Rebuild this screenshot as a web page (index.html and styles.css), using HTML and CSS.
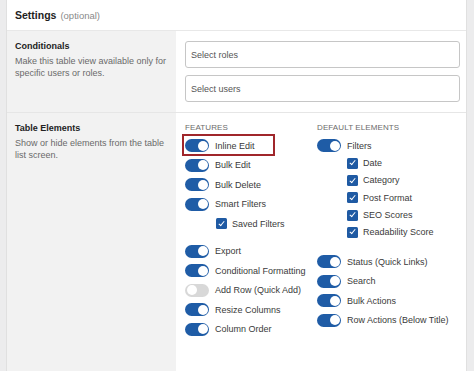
FILE: index.html
```html
<!DOCTYPE html>
<html lang="en">
<head>
    <meta charset="UTF-8">
    <meta name="viewport" content="width=device-width, initial-scale=1.0">
    <title>Settings</title>
    <link rel="stylesheet" href="styles.css">
</head>
<body>
    <div class="panel">
        <div class="panel-header">
            <span class="panel-title">Settings</span> <span class="optional">(optional)</span>
        </div>

        <!-- Conditionals -->
        <div class="row">
            <div class="row-label">
                <h3>Conditionals</h3>
                <p>Make this table view available only for specific users or roles.</p>
            </div>
            <div class="row-body conditions">
                <div class="select">Select roles</div>
                <div class="select">Select users</div>
            </div>
        </div>

        <!-- Table elements -->
        <div class="row last">
            <div class="row-label">
                <h3>Table Elements</h3>
                <p>Show or hide elements from the table list screen.</p>
            </div>
            <div class="row-body elements">
                <div class="col">
                    <div class="col-title">Features</div>
                    <div class="group">
                        <div class="item highlight"><span class="toggle on"></span>Inline Edit</div>
                        <div class="item"><span class="toggle on"></span>Bulk Edit</div>
                        <div class="item"><span class="toggle on"></span>Bulk Delete</div>
                        <div class="item"><span class="toggle on"></span>Smart Filters</div>
                        <div class="item sub"><span class="check"></span>Saved Filters</div>
                    </div>
                    <div class="group spaced">
                        <div class="item"><span class="toggle on"></span>Export</div>
                        <div class="item"><span class="toggle on"></span>Conditional Formatting</div>
                        <div class="item"><span class="toggle"></span>Add Row (Quick Add)</div>
                        <div class="item"><span class="toggle on"></span>Resize Columns</div>
                        <div class="item"><span class="toggle on"></span>Column Order</div>
                    </div>
                </div>
                <div class="col">
                    <div class="col-title">Default Elements</div>
                    <div class="group">
                        <div class="item"><span class="toggle on"></span>Filters</div>
                        <div class="check-list">
                            <div class="item sub"><span class="check"></span>Date</div>
                            <div class="item sub"><span class="check"></span>Category</div>
                            <div class="item sub"><span class="check"></span>Post Format</div>
                            <div class="item sub"><span class="check"></span>SEO Scores</div>
                            <div class="item sub"><span class="check"></span>Readability Score</div>
                        </div>
                    </div>
                    <div class="group spaced-lg">
                        <div class="item"><span class="toggle on"></span>Status (Quick Links)</div>
                        <div class="item"><span class="toggle on"></span>Search</div>
                        <div class="item"><span class="toggle on"></span>Bulk Actions</div>
                        <div class="item"><span class="toggle on"></span>Row Actions (Below Title)</div>
                    </div>
                </div>
            </div>
        </div>
    </div>
</body>
</html>
```

FILE: styles.css
```css
body {
    margin: 0;
    background-color: #ececed;
    font-family: 'Liberation Sans', Arial, sans-serif;
    font-size: 9px;
    color: #3a3a3a;
}
.panel {
    margin: 0 7px 0 6px;
    min-height: 371px;
    background-color: #fff;
    border-left: 1px solid #e0e0e0;
    border-right: 1px solid #e0e0e0;
    display: flex;
    flex-direction: column;
}
.panel-header {
    height: 30px;
    display: flex;
    align-items: center;
    padding: 0 8px;
    border-bottom: 1px solid #e8e8e8;
}
.panel-title {
    font-size: 10.5px;
    font-weight: bold;
    color: #1e1e1e;
    margin-right: 4px;
}
.optional {
    font-size: 9.5px;
    color: #8a8a8a;
}
.row {
    display: grid;
    grid-template-columns: 169px 1fr;
    border-bottom: 1px solid #e6e6e6;
}
.row.last {
    flex: 1;
    border-bottom: none;
}
.row-label {
    background-color: #f2f2f2;
    padding: 9px 8px;
}
.row-label h3 {
    margin: 0;
    font-size: 9px;
    line-height: 12px;
    color: #222;
}
.row-label p {
    margin: 3px 0 0;
    line-height: 12px;
    color: #6a6a6a;
}
.row-body {
    padding: 10px 6px 10px 9px;
}
.conditions {
    display: flex;
    flex-direction: column;
    gap: 7px;
}
.select {
    height: 27px;
    box-sizing: border-box;
    border: 1px solid #c6c6c6;
    border-radius: 3px;
    padding: 0 5px;
    display: flex;
    align-items: center;
    color: #555;
}
.elements {
    padding-top: 9px;
    display: grid;
    grid-template-columns: 132px 1fr;
}
.col-title {
    font-size: 8px;
    line-height: 12px;
    text-transform: uppercase;
    letter-spacing: 0.1px;
    color: #6b6b6b;
    margin-bottom: 2px;
}
.item {
    height: 19.5px;
    display: flex;
    align-items: center;
    gap: 6px;
    white-space: nowrap;
}
.item.sub {
    padding-left: 31px;
    gap: 5px;
}
.check-list {
    margin-top: -1px;
}
.check-list .item {
    height: 17.3px;
    padding-left: 30px;
}
.spaced {
    margin-top: 8px;
}
.spaced-lg {
    margin-top: 11px;
}
.toggle {
    position: relative;
    flex: none;
    width: 24px;
    height: 13px;
    border-radius: 7px;
    background-color: #d8d8d8;
}
.toggle::after {
    content: "";
    position: absolute;
    top: 1.5px;
    left: 1.5px;
    width: 10px;
    height: 10px;
    border-radius: 50%;
    background-color: #fff;
}
.toggle.on {
    background-color: #1f5ca6;
}
.toggle.on::after {
    left: 12.5px;
}
.check {
    position: relative;
    flex: none;
    width: 11px;
    height: 11px;
    border-radius: 1.5px;
    background-color: #1f5aa3;
}
.check::after {
    content: "";
    position: absolute;
    left: 3.6px;
    top: 1.6px;
    width: 2.4px;
    height: 5px;
    border: solid #fff;
    border-width: 0 1.3px 1.3px 0;
    transform: rotate(40deg);
}
/* red frame marking the Inline Edit option */
.highlight {
    position: relative;
}
.highlight::before {
    content: "";
    position: absolute;
    left: -3px;
    top: -2px;
    width: 93px;
    height: 22px;
    box-sizing: border-box;
    border: 2px solid #a0262b;
}
```
